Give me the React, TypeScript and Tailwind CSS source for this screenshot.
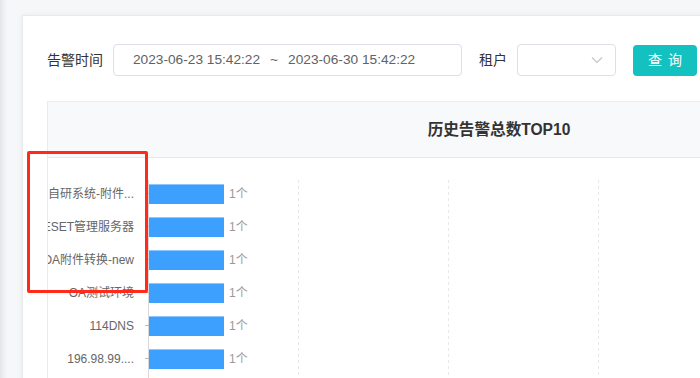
import React from "react";

const rows = [
  "自研系统-附件...",
  "ESET管理服务器",
  "OA附件转换-new",
  "OA测试环境",
  "114DNS",
  "196.98.99....",
  "10.0.12.8",
  "邮件服务器",
  "OA生产环境",
  "VPN网关",
];

export default function App() {
  return (
    <div
      className="relative w-[700px] h-[378px] overflow-hidden bg-[#f6f7f8]"
      style={{ fontFamily: '"Liberation Sans", "Noto Sans CJK SC", sans-serif' }}
    >
      <div className="absolute left-0 top-0 h-full w-[7px] bg-gradient-to-r from-[#e3e5e8] to-[#f6f7f8]" />
      <div className="ml-[22px] mt-[15px] w-[950px] h-[600px] bg-white border-t border-l border-[#e9eaec] shadow-[0_0_6px_rgba(0,0,0,0.06)]">
        {/* form row */}
        <div className="flex items-center pl-[24px] pt-[28px] h-[60px]">
          <span className="w-[55px] shrink-0 whitespace-nowrap text-[14px] text-[#333]">告警时间</span>
          <div className="ml-[11px] flex h-[32px] w-[349px] shrink-0 items-center whitespace-nowrap rounded-[4px] border border-[#dcdfe6] pl-[19px] text-[13.7px] text-[#606266]">
            <span>2023-06-23 15:42:22</span>
            <span className="ml-[10px]">~</span>
            <span className="ml-[10px]">2023-06-30 15:42:22</span>
          </div>
          <span className="ml-[17px] w-[28px] shrink-0 whitespace-nowrap text-[14px] text-[#333]">租户</span>
          <div className="ml-[10px] flex h-[32px] w-[99px] shrink-0 items-center justify-end rounded-[4px] border border-[#dcdfe6] pr-[12px]">
            <svg width="12" height="8" viewBox="0 0 12 8">
              <path d="M1 1.5 L6 6.5 L11 1.5" fill="none" stroke="#c0c4cc" strokeWidth="1.1" />
            </svg>
          </div>
          <div className="ml-[17px] flex h-[31px] w-[64px] shrink-0 items-center justify-center whitespace-nowrap rounded-[4px] bg-[#14c1c1] pl-[6px] text-[14px] tracking-[6px] text-white">
            查询
          </div>
        </div>

        {/* chart panel */}
        <div className="ml-[24px] mt-[25px] w-[900px] h-[500px] border border-[#e9ebef] overflow-hidden">
          <div className="flex h-[56px] items-center justify-center bg-[#f8f9fb] border-b border-[#e6e8eb] pl-[4px] text-[15.6px] font-bold text-[#333]">
            历史告警总数TOP10
          </div>
          <div className="relative pt-[19px]">
            <svg className="absolute left-0 top-0" width="900" height="440">
              <line x1="100.5" y1="22" x2="100.5" y2="440" stroke="#d9d9d9" strokeWidth="1" />
              {[250, 400, 550, 700, 850].map((x) => (
                <line key={x} x1={x + 0.5} y1="22" x2={x + 0.5} y2="440" stroke="#e8e8e8" strokeWidth="1" strokeDasharray="3 3" />
              ))}
            </svg>
            {rows.map((r) => (
              <div key={r} className="relative flex h-[33px] items-center">
                <div className="flex w-[86px] shrink-0 justify-end whitespace-nowrap text-[12px] text-[#666]">
                  {r}
                </div>
                <div className="ml-[11px] h-px w-[4px] bg-[#bbb]" />
                <div className="h-[20px] w-[75px] bg-[#3da0fe] border-t border-[#8cc7ff]" />
                <span className="ml-[5px] text-[12px] text-[#999]">1个</span>
              </div>
            ))}
          </div>
        </div>
      </div>

      {/* annotation box */}
      <div className="absolute left-[27px] top-[151px] h-[142px] w-[121px] rounded-[2px] border-[3px] border-[#ff2a1a]" />
    </div>
  );
}
